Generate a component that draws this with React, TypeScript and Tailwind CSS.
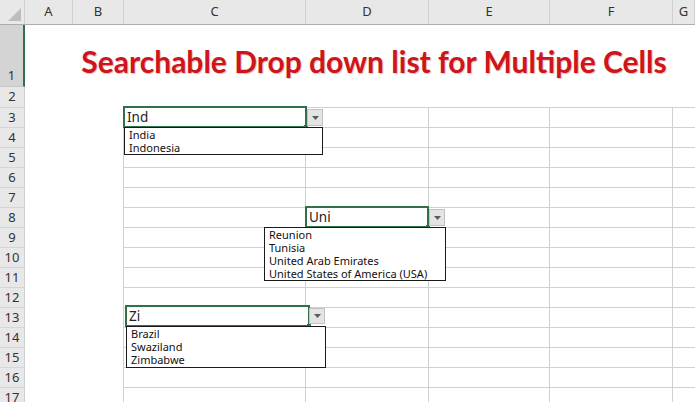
import React from 'react';

const cols = [
  { name: 'A', w: 'w-[48px]' },
  { name: 'B', w: 'w-[51px]' },
  { name: 'C', w: 'w-[182px]' },
  { name: 'D', w: 'w-[123px]' },
  { name: 'E', w: 'w-[121px]' },
  { name: 'F', w: 'w-[123px]' },
  { name: 'G', w: 'flex-1' },
];

const gridRows = [3, 4, 5, 6, 7, 8, 9, 10, 11, 12, 13, 14, 15, 16, 17];

function DropButton({ className }: { className: string }) {
  return (
    <div className={`absolute flex items-center justify-center bg-[#e4e4e4] border border-[#c2c2c2] ${className}`}>
      <svg width="7" height="4" viewBox="0 0 7 4">
        <path d="M0 0H7L3.5 4Z" fill="#5a5a5a" />
      </svg>
    </div>
  );
}

function ActiveCell({ className, text }: { className: string; text: string }) {
  return (
    <div className={`absolute border-2 border-[#31704a] bg-white flex items-center pl-[2px] text-[13.5px] text-[#222] ${className}`}>
      {text}
      <div className="absolute -right-[3px] -bottom-[3px] w-[4px] h-[4px] bg-[#31704a]" />
    </div>
  );
}

function ListBox({ className, items }: { className: string; items: string[] }) {
  return (
    <div className={`absolute bg-white border border-[#1a1a1a] pl-[4px] text-[11px] leading-[13px] text-[#111] ${className}`}>
      {items.map((it) => (
        <div key={it}>{it}</div>
      ))}
    </div>
  );
}

export default function App() {
  return (
    <div className="relative w-[695px] h-[402px] overflow-hidden bg-white font-['Noto_Sans',sans-serif]">
      {/* column headers */}
      <div className="flex h-[25px] bg-[#e8e8e8] border-b border-[#adadad]">
        <div className="w-[25px] border-r border-[#cfcfcf] flex items-end justify-end pr-[3px] pb-[3px]">
          <svg width="13" height="13" viewBox="0 0 13 13">
            <path d="M13 0V13H0Z" fill="#bdbdbd" />
          </svg>
        </div>
        {cols.map((c) => (
          <div
            key={c.name}
            className={`${c.w} shrink-0 border-r border-[#cfcfcf] flex items-center justify-center text-[13px] text-[#333]`}
          >
            {c.name}
          </div>
        ))}
      </div>

      <div className="flex">
        {/* row headers */}
        <div className="w-[25px] shrink-0 flex flex-col text-[13px] text-[#333]">
          <div className="h-[62px] bg-[#d4d4d4] border-r-2 border-r-[#31704a] border-b border-b-[#c8c8c8] flex items-end justify-center pb-[1px]">
            1
          </div>
          <div className="h-[21px] bg-[#e8e8e8] border-r border-[#cfcfcf] border-b border-b-[#d6d6d6] flex items-center justify-center">
            2
          </div>
          {gridRows.map((r) => (
            <div
              key={r}
              className="h-[20px] bg-[#e8e8e8] border-r border-[#cfcfcf] border-b border-b-[#d6d6d6] flex items-center justify-center"
            >
              {r}
            </div>
          ))}
        </div>

        {/* cells */}
        <div className="flex-1 flex flex-col">
          <div className="h-[62px] flex">
            <div className="w-[48px] shrink-0" />
            <div className="w-[602px] shrink-0 flex justify-center pt-[20px]">
              <span className="font-['Lato',sans-serif] font-bold text-[30px] leading-[32px] text-[#cf141b] [text-shadow:1px_1px_1px_rgba(120,0,0,0.25)] whitespace-nowrap">
                Searchable Drop down list for Multiple Cells
              </span>
            </div>
          </div>
          <div className="h-[21px] flex">
            <div className="w-[99px] shrink-0" />
            <div className="flex-1 border-b border-[#d0d0d0]" />
          </div>
          {gridRows.map((r) => (
            <div key={r} className="h-[20px] flex">
              <div className="w-[48px] shrink-0" />
              <div className="w-[51px] shrink-0 border-r border-[#d0d0d0]" />
              <div className="w-[182px] shrink-0 border-r border-b border-[#d0d0d0]" />
              <div className="w-[123px] shrink-0 border-r border-b border-[#d0d0d0]" />
              <div className="w-[121px] shrink-0 border-r border-b border-[#d0d0d0]" />
              <div className="w-[123px] shrink-0 border-r border-b border-[#d0d0d0]" />
              <div className="flex-1 border-b border-[#d0d0d0]" />
            </div>
          ))}
        </div>
      </div>

      {/* dropdown 1 */}
      <ActiveCell className="left-[123px] top-[106px] w-[184px] h-[22px]" text="Ind" />
      <DropButton className="left-[307px] top-[109px] w-[16px] h-[17px]" />
      <ListBox className="left-[124px] top-[127px] w-[199px] h-[28px]" items={['India', 'Indonesia']} />

      {/* dropdown 2 */}
      <ActiveCell className="left-[305px] top-[206px] w-[124px] h-[22px]" text="Uni" />
      <DropButton className="left-[429px] top-[209px] w-[16px] h-[17px]" />
      <ListBox
        className="left-[264px] top-[227px] w-[182px] h-[54px]"
        items={['Reunion', 'Tunisia', 'United Arab Emirates', 'United States of America (USA)']}
      />

      {/* dropdown 3 */}
      <ActiveCell className="left-[125px] top-[305px] w-[185px] h-[22px]" text="Zi" />
      <DropButton className="left-[309px] top-[308px] w-[16px] h-[16px]" />
      <ListBox className="left-[126px] top-[326px] w-[200px] h-[42px]" items={['Brazil', 'Swaziland', 'Zimbabwe']} />
    </div>
  );
}
